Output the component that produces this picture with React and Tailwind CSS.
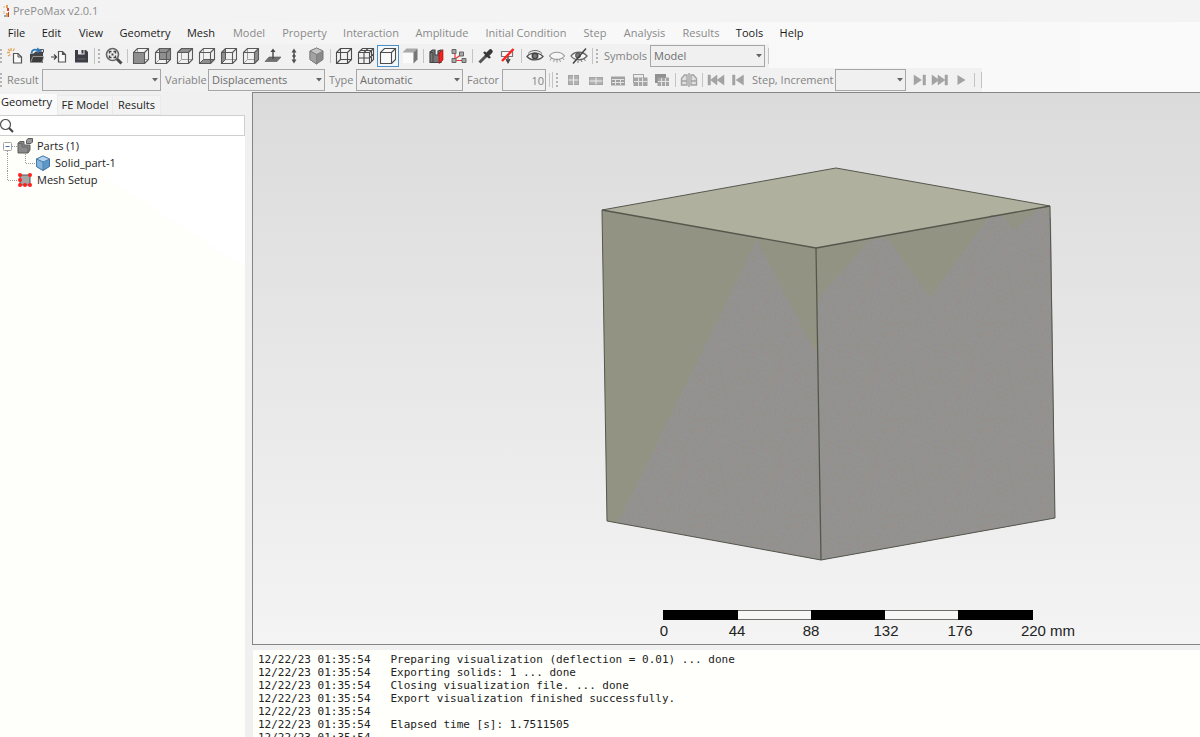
import React from "react";

const MENUS = [
  ["File", "w-[33px]", true],
  ["Edit", "w-[37px]", true],
  ["View", "w-[42px]", true],
  ["Geometry", "w-[66px]", true],
  ["Mesh", "w-[46px]", true],
  ["Model", "w-[50px]", false],
  ["Property", "w-[61px]", false],
  ["Interaction", "w-[72px]", false],
  ["Amplitude", "w-[70px]", false],
  ["Initial Condition", "w-[98px]", false],
  ["Step", "w-[40px]", false],
  ["Analysis", "w-[59px]", false],
  ["Results", "w-[54px]", false],
  ["Tools", "w-[43px]", true],
  ["Help", "w-[41px]", true],
];

const LOG = [
  "Preparing visualization (deflection = 0.01) ... done",
  "Exporting solids: 1 ... done",
  "Closing visualization file. ... done",
  "Export visualization finished successfully.",
  "",
  "Elapsed time [s]: 1.7511505",
  "",
];

function Icon({ children }) {
  return (
    <svg viewBox="0 0 18 18" className="h-[18px] w-[18px]" fill="none" stroke="#5a5a5a" aria-hidden="true">
      {children}
    </svg>
  );
}

const FACES = {
  front: "1.5,5.5 12.5,5.5 12.5,16.5 1.5,16.5",
  back: "5.5,1.5 16.5,1.5 16.5,12.5 5.5,12.5",
  top: "1.5,5.5 5.5,1.5 16.5,1.5 12.5,5.5",
  bottom: "1.5,16.5 5.5,12.5 16.5,12.5 12.5,16.5",
  left: "1.5,5.5 5.5,1.5 5.5,12.5 1.5,16.5",
  right: "12.5,5.5 16.5,1.5 16.5,12.5 12.5,16.5",
};

function CubeView({ face }) {
  return (
    <Icon>
      <path d="M5.5 1.5V12.5H16.5M5.5 12.5L1.5 16.5" stroke="#a0a0a0" />
      <polygon points={FACES[face]} fill="#8f8f8f" stroke="#5a5a5a" />
      <path d="M1.5 5.5H12.5V16.5H1.5ZM1.5 5.5L5.5 1.5H16.5V12.5L12.5 16.5M12.5 5.5L16.5 1.5" strokeWidth="1.1" />
    </Icon>
  );
}

const ICONS = {
  new: (
    <Icon>
      <path d="M7.5 6.5H12L15.5 10V16H7.5Z" stroke="#555" strokeWidth="1.2" fill="#fafafa" />
      <path d="M12 6.5V10H15.5" stroke="#555" />
      <path d="M5 1V4M1 5.5H4M2 2L4 4M8.5 1.5L7 4M2 9L4.5 7.5" stroke="#e5a55c" strokeWidth="1.3" />
    </Icon>
  ),
  open: (
    <Icon>
      <path d="M2.5 15.5V7H6L7.5 5H14.5V15.5Z" fill="#454545" stroke="#3c3c3c" />
      <path d="M2.5 15.5L5 9.5H16L14 15.5Z" fill="#3c3c3c" stroke="#cfcfcf" strokeWidth=".6" />
      <path d="M3.5 6C4 2.5 7 2 10 3.5" stroke="#2f78b8" strokeWidth="1.8" />
      <path d="M9 .5L14 3.5L9.5 6.5Z" fill="#2f78b8" stroke="none" />
      <path d="M12 2.5H15.5V5.5" stroke="#555" />
    </Icon>
  ),
  import: (
    <Icon>
      <path d="M8.5 4.5H12.5L15.5 7.5V15H8.5ZM12.5 4.5V7.5H15.5" stroke="#555" strokeWidth="1.2" fill="#fafafa" />
      <path d="M1 10H6M4 7.5L6.5 10L4 12.5" stroke="#404040" strokeWidth="1.2" />
    </Icon>
  ),
  save: (
    <Icon>
      <path d="M3 3H14L16 5V15.5H3Z" fill="#3d3d45" stroke="none" />
      <path d="M6 3H12.5V7.5H6Z" fill="#e8e8e8" stroke="none" />
      <path d="M9.5 3H11.5V6.5H9.5Z" fill="#3d3d45" stroke="none" />
      <path d="M5.5 12H13.5" stroke="#66666d" />
    </Icon>
  ),
  fit: (
    <Icon>
      <circle cx="7.5" cy="7.5" r="6" stroke="#666" strokeWidth="1.6" fill="#eee" />
      <path d="M12 12L16.5 16.5" stroke="#484848" strokeWidth="3" />
      <path d="M4.5 6.5V4.5H6.5M8.5 4.5H10.5V6.5M10.5 8.5V10.5H8.5M6.5 10.5H4.5V8.5" stroke="#444" strokeWidth="1.4" />
      <rect x="6.5" y="6.5" width="2" height="2" fill="#444" stroke="none" />
    </Icon>
  ),
  plane: (
    <Icon>
      <path d="M1 14.5L5 10H17L13 14.5Z" fill="#707070" stroke="#555" strokeWidth=".6" />
      <path d="M9 12V3" stroke="#484848" strokeWidth="1.4" />
      <path d="M6.5 5L9 1.5L11.5 5Z" fill="#484848" stroke="none" />
    </Icon>
  ),
  vertical: (
    <Icon>
      <path d="M8 3V15" stroke="#505050" strokeWidth="1.4" />
      <path d="M5.5 5.5L8 1.5L10.5 5.5ZM5.5 12.5L8 16.5L10.5 12.5ZM6 9L8 7L10 9L8 11Z" fill="#505050" stroke="none" />
    </Icon>
  ),
  iso: (
    <Icon>
      <path d="M8.5 1L15 4V12.5L8.5 17L2 12.5V4Z" fill="#8a8a8a" stroke="#777" />
      <path d="M2 4L8.5 1L15 4L8.5 7.5Z" fill="#c5c5c5" stroke="#777" strokeWidth=".7" />
      <path d="M2 4L8.5 7.5V17L2 12.5Z" fill="#a2a2a2" stroke="#777" strokeWidth=".7" />
    </Icon>
  ),
  wire: (
    <Icon>
      <path d="M1.5 5.5H12.5V16.5H1.5ZM5.5 1.5H16.5V12.5H5.5ZM1.5 5.5L5.5 1.5M12.5 5.5L16.5 1.5M12.5 16.5L16.5 12.5M1.5 16.5L5.5 12.5" stroke="#4c4c4c" strokeWidth="1.1" />
    </Icon>
  ),
  elements: (
    <Icon>
      <path d="M1.5 5.5H12.5V16.5H1.5ZM1.5 5.5L5.5 1.5H16.5V12.5L12.5 16.5M12.5 5.5L16.5 1.5M7 5.5V16.5M1.5 11H12.5M7 5.5L11 1.5M3.5 3.5H14.5V14.5M12.5 11L16.5 7" stroke="#4c4c4c" strokeWidth="1.1" />
    </Icon>
  ),
  edges: (
    <Icon>
      <path d="M1.5 5.5H12.5V16.5H1.5ZM1.5 5.5L5.5 1.5H16.5V12.5L12.5 16.5M12.5 5.5L16.5 1.5" stroke="#4c4c4c" strokeWidth="1.1" fill="#fafafa" />
    </Icon>
  ),
  shaded: (
    <Icon>
      <path d="M1.5 5.5H12.5V16.5H1.5Z" fill="#fafafa" stroke="#eee" strokeWidth=".5" />
      <path d="M1.5 5.5L5.5 1.5H16.5L12.5 5.5Z" fill="#a9a9a9" stroke="none" />
      <path d="M12.5 5.5L16.5 1.5V12.5L12.5 16.5Z" fill="#777" stroke="none" />
    </Icon>
  ),
  section: (
    <Icon>
      <path d="M2 5L4.5 3H7V8H10V4L13 3V15.5H2Z" fill="#777" stroke="#444" strokeWidth="1.2" />
      <path d="M5 5.5V15M2 5.5H5" stroke="#444" />
      <path d="M11 6L15 2.5V13L11 16.5Z" fill="#ff1c1c" stroke="#7a1515" strokeWidth=".6" />
    </Icon>
  ),
  explode: (
    <Icon>
      <path d="M5 6V12L12 7M6 13.5H12" stroke="#ee3333" strokeWidth="1.2" />
      <path d="M2 2.5H6V6.5H2ZM9.5 5H13.5V9H9.5ZM2 11.5H6V15.5H2ZM12 11.5H16V15.5H12Z" fill="#a8a8a8" stroke="#666" />
    </Icon>
  ),
  picker: (
    <Icon>
      <path d="M2.5 15.5L9 9" stroke="#555" strokeWidth="3" />
      <path d="M7 5L13 11" stroke="#383838" strokeWidth="2.4" />
      <path d="M10 8L13.5 4.5" stroke="#383838" strokeWidth="4.5" strokeLinecap="round" />
    </Icon>
  ),
  removeAnnotation: (
    <Icon>
      <path d="M2.5 4.5H13.5V9.5H2.5Z" fill="#fafafa" stroke="#777" strokeWidth="1.2" />
      <path d="M9 9.5V15.5M7 12L9 15.5L11 12" stroke="#444" strokeWidth="1.4" />
      <path d="M3 14L14.5 2" stroke="#ff2020" strokeWidth="2.4" />
    </Icon>
  ),
  eye: (
    <Icon>
      <path d="M1 9.5C4.5 5 13 5 17 9.5C13 14 4.5 14 1 9.5Z" stroke="#505050" strokeWidth="1.3" fill="#f6f6f6" />
      <circle cx="9" cy="9" r="2.7" fill="#777" stroke="#444" strokeWidth="1.5" />
      <path d="M2 6.5C5.5 2.5 12.5 2.5 16 6.5" stroke="#666" />
    </Icon>
  ),
  eyeClosed: (
    <Icon>
      <path d="M1.5 9C4.5 4 13 4 16.5 9C13 13.5 4.5 13.5 1.5 9Z" stroke="#999" strokeWidth="1.2" fill="#f6f6f6" />
      <path d="M3.5 11L2 13.5M6.5 12.5L5.5 15M9 12.8V15.5M11.5 12.5L12.5 15M14.5 11L16 13" stroke="#999" />
    </Icon>
  ),
  eyeInvert: (
    <Icon>
      <path d="M1 9C4.5 4 13 4 17 9C13 14 4.5 14 1 9Z" stroke="#666" strokeWidth="1.3" fill="#f6f6f6" />
      <circle cx="8" cy="8.5" r="2.5" fill="#777" stroke="#555" />
      <path d="M8 14V16M11 13L12 15M14 12L15.5 14" stroke="#777" />
      <path d="M3 16.5L16 1.5" stroke="#444" strokeWidth="1.5" />
    </Icon>
  ),
};

function Btn({ label, selected, disabled, children, width = "w-[22px]" }) {
  return (
    <button
      type="button"
      aria-label={label}
      disabled={disabled}
      className={`flex h-[22px] shrink-0 items-center justify-center ${width} ${selected ? "border border-[#4a8fc7] bg-[#f2f7fb]" : ""}`}
    >
      {children}
    </button>
  );
}

function Sep() {
  return (
    <span className="flex w-[5px] shrink-0 justify-center">
      <span className="h-3.5 w-px bg-[#c4c4c4]" />
    </span>
  );
}

function Grip() {
  return <span className="h-3.5 w-0.5 shrink-0 bg-[repeating-linear-gradient(#b4b4b4_0_2px,transparent_2px_4px)]" />;
}

function BarEnd() {
  return (
    <span className="flex w-[11px] shrink-0 items-center gap-[3px] pl-0.5">
      <span className="h-4 w-px bg-[#c4c4c4]" />
      <Grip />
    </span>
  );
}

function Dropdown({ id, value, width }) {
  return (
    <span className={`relative flex h-[22px] shrink-0 ${width}`}>
      <select
        id={id}
        disabled
        className="h-full w-full appearance-none truncate border border-[#a6a6a6] bg-[#f0f0f0] pl-[3px] pr-3 text-[11px] text-[#6d6d6d] opacity-100"
      >
        <option>{value}</option>
      </select>
      <svg viewBox="0 0 6 4" className="pointer-events-none absolute right-[3px] top-[9px] h-1 w-1.5" aria-hidden="true">
        <path d="M0 0H6L3 3.5Z" fill="#666" />
      </svg>
    </span>
  );
}

function Label({ htmlFor, width, children }) {
  return (
    <label htmlFor={htmlFor} className={`shrink-0 whitespace-nowrap text-[11px] text-[#838383] ${width}`}>
      {children}
    </label>
  );
}

function ResultIcon({ kind }) {
  const g = "#a3a3a3";
  return (
    <svg viewBox="0 0 18 18" className="h-[18px] w-[18px]" fill="none" stroke={g} aria-hidden="true">
      {kind === "undeformed" && (
        <>
          <rect x="3.5" y="4.5" width="10" height="9" fill="#b2b2b2" stroke={g} />
          <path d="M8.5 4V14M3.5 9H13.5" stroke="#eee" />
        </>
      )}
      {kind === "deformed" && (
        <>
          <rect x="2.5" y="6.5" width="13" height="7" fill="#b2b2b2" />
          <path d="M2.5 10H15.5M9 6.5V13.5" stroke="#eee" />
        </>
      )}
      {kind === "contour" && (
        <>
          <rect x="2.5" y="6" width="13" height="8" fill="#9f9f9f" />
          <path d="M3 8.5H15M3 11.5H15M6.5 8V14M11.5 8V14" stroke="#e4e4e4" />
        </>
      )}
      {kind === "overlayWire" && (
        <>
          <rect x="2.5" y="3.5" width="10" height="8" fill="#eee" />
          <rect x="3" y="7" width="13" height="7.5" fill="#a5a5a5" />
          <path d="M3 10.5H16M7.5 7V15M11.5 7V15" stroke="#e4e4e4" />
        </>
      )}
      {kind === "overlaySolid" && (
        <>
          <rect x="2.5" y="3.5" width="10" height="8" fill="#909090" stroke="#909090" />
          <rect x="5" y="7" width="10.5" height="7.5" fill="#a5a5a5" />
          <path d="M5 10.5H16M8.5 7V15M12.5 7V15" stroke="#e4e4e4" />
        </>
      )}
      {kind === "transform" && (
        <>
          <path d="M1.5 14V7.5L4.5 4H7V14ZM16.5 14V7.5L13.5 4H11V14ZM2 10H7M11 10H16" fill="#e0e0e0" strokeWidth="1.4" />
          <path d="M9 2V16" strokeWidth="1.4" />
        </>
      )}
      {kind === "first" && <path d="M1 4H3.5V14H1ZM10 4V14L3.5 9ZM17 4V14L10 9Z" fill={g} stroke={g} strokeWidth=".5" />}
      {kind === "previous" && <path d="M3.5 4H6V14H3.5ZM14.5 4V14L7 9Z" fill={g} stroke={g} strokeWidth=".5" />}
      {kind === "next" && <path d="M3 4L10.5 9L3 14ZM12 4H14.5V14H12Z" fill={g} stroke={g} strokeWidth=".5" />}
      {kind === "last" && <path d="M1 4L8 9L1 14ZM7 4L14 9L7 14ZM14 4H16.5V14H14Z" fill={g} stroke={g} strokeWidth=".5" />}
      {kind === "play" && <path d="M5.5 4L13.5 9L5.5 14Z" fill={g} stroke="none" />}
    </svg>
  );
}

function RBtn({ label, kind, width }) {
  return (
    <Btn label={label} disabled width={width}>
      <ResultIcon kind={kind} />
    </Btn>
  );
}

function ViewToolbar() {
  return (
    <div role="toolbar" aria-label="View" className="flex h-6 w-max items-center bg-[#f1f1f1]">
      <span className="flex w-1 shrink-0"><Grip /></span>
      <Btn label="New">{ICONS.new}</Btn>
      <Btn label="Open">{ICONS.open}</Btn>
      <Btn label="Import">{ICONS.import}</Btn>
      <Btn label="Save">{ICONS.save}</Btn>
      <BarEnd />
      <Btn label="Zoom to fit">{ICONS.fit}</Btn>
      <Sep />
      <Btn label="Front view"><CubeView face="front" /></Btn>
      <Btn label="Back view"><CubeView face="back" /></Btn>
      <Btn label="Top view"><CubeView face="top" /></Btn>
      <Btn label="Bottom view"><CubeView face="bottom" /></Btn>
      <Btn label="Left view"><CubeView face="left" /></Btn>
      <Btn label="Right view"><CubeView face="right" /></Btn>
      <Btn label="Normal view">{ICONS.plane}</Btn>
      <Btn label="Vertical view">{ICONS.vertical}</Btn>
      <Btn label="Isometric view">{ICONS.iso}</Btn>
      <Sep />
      <Btn label="Wireframe">{ICONS.wire}</Btn>
      <Btn label="Show element edges">{ICONS.elements}</Btn>
      <Btn label="Show model edges" selected>{ICONS.edges}</Btn>
      <Btn label="No edges">{ICONS.shaded}</Btn>
      <Sep />
      <Btn label="Section view">{ICONS.section}</Btn>
      <Btn label="Exploded view">{ICONS.explode}</Btn>
      <Sep />
      <Btn label="Query">{ICONS.picker}</Btn>
      <Btn label="Remove annotations">{ICONS.removeAnnotation}</Btn>
      <Sep />
      <Btn label="Show all">{ICONS.eye}</Btn>
      <Btn label="Hide all">{ICONS.eyeClosed}</Btn>
      <Btn label="Invert visibility">{ICONS.eyeInvert}</Btn>
      <BarEnd />
      <Label htmlFor="symbols" width="w-[49px] pl-[3px]">Symbols</Label>
      <Dropdown id="symbols" value="Model" width="w-[115px]" />
      <span className="ml-[3px] h-4 w-px bg-[#c4c4c4]" />
    </div>
  );
}

function ResultToolbar() {
  return (
    <div role="toolbar" aria-label="Results" className="flex h-6 w-max items-center bg-[#f1f1f1]">
      <span className="flex w-[7px] shrink-0"><Grip /></span>
      <Label htmlFor="result" width="w-[35px]">Result</Label>
      <Dropdown id="result" value="" width="w-[119px]" />
      <Label htmlFor="variable" width="w-[47px] pl-1">Variable</Label>
      <Dropdown id="variable" value="Displacements" width="w-[117px]" />
      <Label htmlFor="type" width="w-[31px] pl-1">Type</Label>
      <Dropdown id="type" value="Automatic" width="w-[107px]" />
      <Label htmlFor="factor" width="w-[39px] pl-1">Factor</Label>
      <input
        id="factor"
        defaultValue="10"
        disabled
        className="h-[22px] w-[44px] shrink-0 border border-[#a6a6a6] bg-[#f0f0f0] px-px text-right text-[11px] text-[#838383]"
      />
      <span className="ml-[3px] h-3.5 w-px bg-[#c4c4c4]" />
      <BarEnd />
      <span className="w-0.5" />
      <RBtn label="Undeformed" kind="undeformed" />
      <RBtn label="Deformed" kind="deformed" />
      <RBtn label="Color contours" kind="contour" />
      <RBtn label="Undeformed wireframe overlay" kind="overlayWire" />
      <RBtn label="Undeformed solid overlay" kind="overlaySolid" />
      <Sep />
      <RBtn label="Transformation" kind="transform" />
      <Sep />
      <RBtn label="First increment" kind="first" />
      <RBtn label="Previous increment" kind="previous" />
      <Label htmlFor="increment" width="w-[86px] pl-[3px]">Step, Increment</Label>
      <Dropdown id="increment" value="" width="w-[71px]" />
      <span className="w-1" />
      <RBtn label="Next increment" kind="next" width="w-5" />
      <RBtn label="Last increment" kind="last" width="w-5" />
      <RBtn label="Animate" kind="play" width="w-[22px]" />
      <Sep />
      <span className="ml-1 h-4 w-px bg-[#c4c4c4]" />
    </div>
  );
}

const PartsIcon = (
  <svg viewBox="0 0 16 16" className="h-4 w-4 shrink-0" aria-hidden="true">
    <path d="M1 5L3 3.5H7V7H13V12L11 15H1Z" fill="#8a8a8a" stroke="#5d5d5d" />
    <path d="M1 5.5H5V9H11V15" fill="none" stroke="#666" />
    <path d="M9.5 2.5L11 .5H15.5V4L14 5.5H9.5Z" fill="#999" stroke="#5d5d5d" />
  </svg>
);

const SolidIcon = (
  <svg viewBox="0 0 16 16" className="h-4 w-4 shrink-0" aria-hidden="true">
    <path d="M8 1L14.5 4V11.5L8 15.5L1.5 11.5V4Z" fill="#5d98c9" stroke="#41719c" />
    <path d="M1.5 4L8 1L14.5 4L8 7Z" fill="#b5d5ee" stroke="#41719c" strokeWidth=".7" />
    <path d="M1.5 4L8 7V15.5L1.5 11.5Z" fill="#83b4dc" stroke="#41719c" strokeWidth=".7" />
  </svg>
);

const MeshIcon = (
  <svg viewBox="0 0 16 16" className="h-4 w-4 shrink-0" aria-hidden="true">
    <path d="M3 3H13V13H3Z" fill="#a6a6a6" stroke="#555" />
    <g fill="#ff2020">
      <circle cx="3" cy="3" r="2" />
      <circle cx="13" cy="3" r="2" />
      <circle cx="3" cy="8" r="2" />
      <circle cx="3" cy="13" r="2" />
      <circle cx="8" cy="13" r="2" />
      <circle cx="13" cy="13" r="2" />
    </g>
  </svg>
);

function Connector({ d, width }) {
  return (
    <svg className={`h-[17px] shrink-0 ${width}`} aria-hidden="true">
      <path d={d} fill="none" stroke="#9a9a9a" strokeDasharray="1 1" />
    </svg>
  );
}

function TreePanel() {
  return (
    <aside className="flex w-[252px] shrink-0 flex-col pr-[7px]">
      <div role="tablist" className="flex h-[23px] items-end pt-0.5 text-[11px] text-[#222]">
        <button type="button" role="tab" aria-selected="true" className="flex h-[21px] w-[57px] justify-start bg-[#fafafa] pl-px">Geometry</button>
        <button type="button" role="tab" aria-selected="false" className="h-5 w-[56px] border border-[#eaeaea] bg-[#f3f3f3]">
          <span className="whitespace-nowrap">FE Model</span>
        </button>
        <button type="button" role="tab" aria-selected="false" className="h-5 w-[48px] border border-l-0 border-[#eaeaea] bg-[#f3f3f3]">Results</button>
      </div>
      <div className="flex h-[21px] items-center border border-l-0 border-[#cfcfcf] bg-white">
        <svg viewBox="0 0 14 14" className="h-3.5 w-3.5 shrink-0" fill="none" aria-hidden="true">
          <circle cx="5.5" cy="5.5" r="5" stroke="#555" strokeWidth="1.2" />
          <path d="M9 9L13 13" stroke="#444" strokeWidth="2.2" />
        </svg>
        <input aria-label="Search tree" className="min-w-0 flex-1 bg-transparent text-[11px] outline-none" />
      </div>
      <ul
        role="tree"
        className="flex-1 bg-[linear-gradient(213deg,#ffffff_110px,#fefefb_111px)] pt-px text-[11px] leading-[17px] text-[#222]"
      >
        <li role="treeitem" aria-expanded="true">
          <div className="flex items-center">
            <button type="button" aria-label="Collapse Parts" className="h-[17px] w-[17px] shrink-0">
              <svg viewBox="0 0 17 17" className="h-[17px] w-[17px]" fill="none" aria-hidden="true">
                <path d="M12 9.5H17M7.5 14V17" stroke="#9a9a9a" strokeDasharray="1 1" />
                <rect x="3.5" y="5.5" width="8" height="8" rx="1" fill="#fff" stroke="#a3a3a3" />
                <path d="M5.5 9.5H9.5" stroke="#3f6fb0" />
              </svg>
            </button>
            {PartsIcon}
            <span className="pl-1">Parts (1)</span>
          </div>
          <ul role="group">
            <li role="treeitem" className="flex items-center">
              <Connector width="w-[35px]" d="M7.5 0V17M25.5 0V9.5H35" />
              {SolidIcon}
              <span className="pl-1">Solid_part-1</span>
            </li>
          </ul>
        </li>
        <li role="treeitem" className="flex items-center">
          <Connector width="w-[17px]" d="M7.5 0V9.5H17" />
          {MeshIcon}
          <span className="pl-1">Mesh Setup</span>
        </li>
      </ul>
    </aside>
  );
}

const TICKS = [
  [411, "0"],
  [484, "44"],
  [558, "88"],
  [633, "132"],
  [707, "176"],
  [795, "220 mm"],
];

// Speckle tile: a loose checker of blue grey over olive, with brown dots at random.
const TILE = 96;
const SPECKLE = (() => {
  let seed = 7;
  const random = () => {
    seed = (seed * 1103515245 + 12345) % 2147483648;
    return seed / 2147483648;
  };
  const out = { blue: "", brown: "" };
  for (let y = 0; y < TILE; y += 1) {
    for (let x = 0; x < TILE; x += 1) {
      const r = random();
      const cell = `M${x} ${y}h1v1h-1z`;
      if ((x + y) % 2 === 0) {
        if (r < 0.9) out.blue += cell;
      } else if (r < 0.5) {
        out.brown += cell;
      }
    }
  }
  return out;
})();

function Viewport() {
  return (
    <section aria-label="3D view" className="min-h-0 flex-1 border border-r-0 border-[#858585] bg-linear-to-b from-[#dbdbdb] to-[#f4f4f4]">
      <svg viewBox="0 -1 947 551" className="h-full w-full" role="img" aria-label="Solid_part-1">
        <defs>
          <pattern id="grain" width={TILE} height={TILE} patternUnits="userSpaceOnUse">
            <rect width={TILE} height={TILE} fill="#94938a" />
            <path d={SPECKLE.blue} fill="#90949a" />
            <path d={SPECKLE.brown} fill="#998c83" />
          </pattern>
        </defs>
        <polygon points="349,116 583,74 797,112 563,154" fill="#afb09d" />
        <polygon points="349,116 563,154 568,466 354,427" fill="#929383" />
        <polygon points="563,154 797,112 802,424 568,466" fill="#929383" />
        <polygon points="365,429 504,146 559,252 565,257 568,466" fill="url(#grain)" />
        <polygon points="565,205 614,149 632,142 677,203 738,121 748,121 761,136 785,115 792,114 798,125 802,424 568,466" fill="url(#grain)" />
        <g fill="none" stroke="#55574d" strokeLinejoin="round">
          <path d="M349 116L583 74L797 112L802 424L568 466L354 427Z" />
          <path d="M349 116L563 154L797 112M563 154L568 466" strokeWidth="1.3" />
        </g>
        <rect x="410.5" y="516.5" width="369" height="9" fill="#f7f7f7" stroke="#6b7068" />
        <path d="M410 516H485V526H410ZM558 516H632V526H558ZM705 516H780V526H705Z" fill="#000" />
        <g fill="#222" fontSize="15" textAnchor="middle" className="font-['Liberation_Sans',sans-serif]">
          {TICKS.map(([x, t]) => (
            <text key={t} x={x} y="542">{t}</text>
          ))}
        </g>
      </svg>
    </section>
  );
}

export default function App() {
  return (
    <div className="flex h-screen flex-col overflow-hidden bg-[#f0f0f0] font-['Open_Sans','Noto_Sans',sans-serif]">
      <header className="flex h-[22px] shrink-0 items-center bg-[#f3f3f3] pl-[3px]">
        <svg viewBox="0 0 8 14" className="h-3.5 w-2" aria-hidden="true">
          <path d="M0 2h2v2H0zM0 7h2v3H0z" fill="#efd5b8" />
          <path d="M3 1h2v3H3zM3 9h2v4H3z" fill="#e39a55" />
          <path d="M4 4h2v3H4z" fill="#d94a3a" />
          <path d="M1 11h2v2H1z" fill="#7fb0c8" />
          <path d="M5 8h1v5H5z" fill="#b8432e" />
        </svg>
        <h1 className="pl-0.5 text-[11px] text-[#8b8b8b]">PrePoMax v2.0.1</h1>
      </header>
      <div className="shrink-0 bg-linear-to-r from-[#f1f1f1] via-[#f8f8f8] to-[#fafafa]">
        <nav aria-label="Main menu" className="flex h-[22px] items-center text-[11px]">
          {MENUS.map(([name, width, enabled]) => (
            <button
              key={name}
              type="button"
              disabled={!enabled}
              className={`flex shrink-0 justify-center whitespace-nowrap ${width} ${enabled ? "text-[#1a1a1a]" : "text-[#8a8a8a]"}`}
            >
              {name}
            </button>
          ))}
        </nav>
        <ViewToolbar />
        <ResultToolbar />
      </div>
      <main className="flex min-h-0 flex-1">
        <TreePanel />
        <div className="flex min-w-0 flex-1 flex-col">
          <Viewport />
          <div
            role="log"
            className="mt-[5px] ml-px h-[87px] shrink-0 overflow-hidden bg-[#fffffc] pt-[3px] pl-[5px] font-['DejaVu_Sans_Mono',monospace] text-[11px] leading-[13px] text-[#222]"
          >
            {LOG.map((line, i) => (
              <p key={i} className="whitespace-pre">{"12/22/23 01:35:54   " + line}</p>
            ))}
          </div>
        </div>
      </main>
    </div>
  );
}
